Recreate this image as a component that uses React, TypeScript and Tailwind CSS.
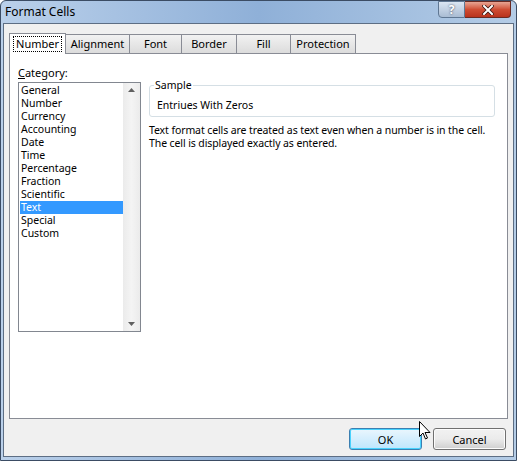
import React from 'react'

const font = { fontFamily: '"Noto Sans", "Open Sans", sans-serif' }

const categories = ['General', 'Number', 'Currency', 'Accounting', 'Date', 'Time', 'Percentage', 'Fraction', 'Scientific', 'Text', 'Special', 'Custom']
const tabs = ['Alignment', 'Font', 'Border', 'Fill', 'Protection']
const tabWidths = ['w-[64px]', 'w-[52px]', 'w-[55px]', 'w-[54px]', 'w-[65px]']

export default function App() {
  return (
    <div className="relative h-[465px] w-[518px] overflow-hidden bg-white text-[10.5px] text-black" style={font}>
      {/* window frame */}
      <div className="flex h-[461px] w-[517px] flex-col rounded-t-[6px] border border-[#3b4c64] bg-gradient-to-r from-[#bad0ea] via-[#8fb0d8] to-[#b4cce6]">
        {/* title bar */}
        <div className="flex h-[22px] items-start">
          <span className="mt-[3px] ml-[4px] text-[12px] leading-[16px] text-black">Format Cells</span>
          <div className="ml-auto mr-[5px] flex">
            <div className="flex h-[17px] w-[27px] items-center justify-center rounded-bl-[4px] border border-[#5f7793] bg-gradient-to-b from-[#dbe6f3] to-[#a9bcd3] text-[12px] font-bold leading-none text-white [text-shadow:0_0_2px_#334]">?</div>
            <div className="flex h-[17px] w-[46px] items-center justify-center rounded-br-[4px] border border-l-0 border-[#6b2a22] bg-gradient-to-b from-[#e7a493] via-[#cf4d33] to-[#b9321c]">
              <svg width="12" height="10" viewBox="0 0 12 10">
                <path d="M2 1 L10 9 M10 1 L2 9" stroke="#3a1510" strokeWidth="3.6" strokeLinecap="square" />
                <path d="M2 1 L10 9 M10 1 L2 9" stroke="#fff" strokeWidth="2" strokeLinecap="square" />
              </svg>
            </div>
          </div>
        </div>

        {/* client area */}
        <div className="mx-[2px] mb-[3px] flex flex-1 flex-col border border-[#5d6e84] bg-[#f0f0f0]">
          {/* tabs */}
          <div className="mt-[8px] ml-[5px] flex h-[21px] items-end text-[11px]">
            <div className="relative z-10 -mb-px flex h-[21px] w-[57px] items-start justify-center border border-b-0 border-[#898c95] bg-white pt-[2px]">
              <span className="border border-dotted border-black px-[2px] leading-[14px]">Number</span>
            </div>
            {tabs.map((t, i) => (
              <div key={t} className={`${tabWidths[i]} flex h-[19px] items-center justify-center border border-l-0 border-b-0 border-[#898c95] bg-gradient-to-b from-[#f2f2f2] to-[#dcdcdc] leading-[14px]`}>
                {t}
              </div>
            ))}
          </div>

          {/* tab pane */}
          <div className="mx-[5px] flex h-[366px] border border-[#898c95] bg-white">
            <div className="ml-[8px] flex w-[123px] shrink-0 flex-col">
              <div className="mt-[11px] h-[16px] text-[11px] leading-[16px]"><span className="underline">C</span>ategory:</div>
              <div className="mt-[1px] flex h-[250px] border border-[#828790]">
                <div className="flex-1 pt-[1px]">
                  {categories.map((c) => (
                    <div key={c} className={`ml-[1px] h-[13px] pl-[1px] leading-[13px] ${c === 'Text' ? 'bg-[#3399ff] text-white' : ''}`}>{c}</div>
                  ))}
                </div>
                <div className="flex w-[17px] flex-col items-center justify-between bg-gradient-to-r from-[#ebebeb] via-[#f4f4f4] to-[#ebebeb] py-[5px]">
                  <svg width="7" height="4" viewBox="0 0 7 4"><path d="M0 4 L3.5 0 L7 4 Z" fill="#606060" /></svg>
                  <svg width="7" height="4" viewBox="0 0 7 4"><path d="M0 0 L3.5 4 L7 0 Z" fill="#606060" /></svg>
                </div>
              </div>
            </div>

            <div className="ml-[8px] flex min-w-0 flex-1 flex-col">
              <div className="relative mt-[31px] h-[32px] w-[346px] rounded-[3px] border border-[#d5dfe5]">
                <span className="absolute -top-[9px] left-[4px] bg-white px-[1px] leading-[16px]">Sample</span>
                <div className="mt-[12px] ml-[7px] leading-[15px]">Entriues With Zeros</div>
              </div>
              <p className="mt-[7px] whitespace-nowrap leading-[13px] tracking-[-0.1px]">
                Text format cells are treated as text even when a number is in the cell.
                <br />
                The cell is displayed exactly as entered.
              </p>
            </div>
          </div>

          {/* buttons */}
          <div className="mt-[9px] mr-[7px] flex justify-end gap-[11px] text-[11px]">
            <button className="h-[22px] w-[73px] rounded-[3px] border border-[#3c7fb1] bg-gradient-to-b from-[#eaf6fd] to-[#bee6fd] shadow-[inset_0_0_0_1px_#48d2fd] leading-none">OK</button>
            <button className="h-[22px] w-[73px] rounded-[3px] border border-[#707070] bg-gradient-to-b from-[#f2f2f2] via-[#ebebeb] to-[#cfcfcf] shadow-[inset_0_0_0_1px_#fcfcfc] leading-none">Cancel</button>
          </div>
        </div>
      </div>

      {/* mouse cursor */}
      <svg className="absolute left-[419px] top-[421px]" width="13" height="20" viewBox="0 0 13 20">
        <path d="M0.5 0.5 L0.5 15.5 L4 12 L6.5 18 L8.5 17 L6 11.5 L11 11.5 Z" fill="#fff" stroke="#000" strokeWidth="1" strokeLinejoin="round" />
      </svg>
    </div>
  )
}
